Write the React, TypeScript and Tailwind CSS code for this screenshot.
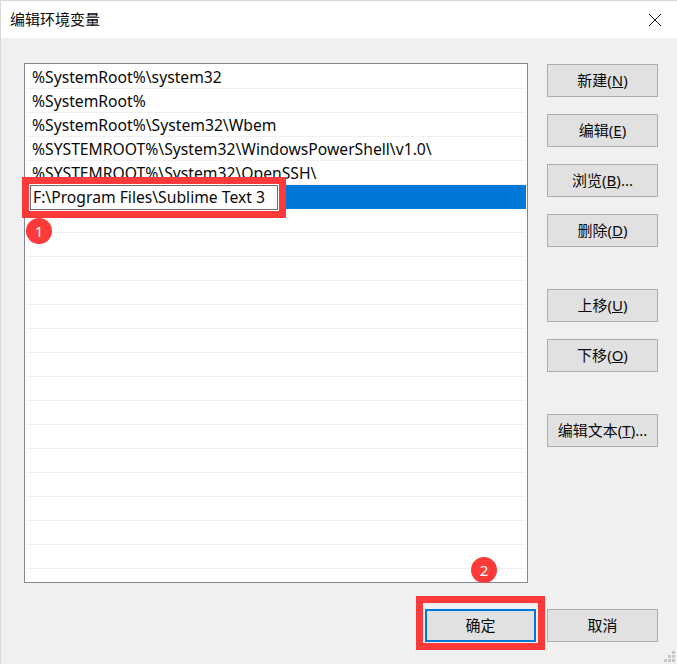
const FONT = "font-['Noto_Sans','Noto_Sans_CJK_SC',sans-serif]";

const paths = [
  "%SystemRoot%\\system32",
  "%SystemRoot%",
  "%SystemRoot%\\System32\\Wbem",
  "%SYSTEMROOT%\\System32\\WindowsPowerShell\\v1.0\\",
  "%SYSTEMROOT%\\System32\\OpenSSH\\",
];

function Btn({ label, u, tail = "", cls = "mt-0" }: { label: string; u?: string; tail?: string; cls?: string }) {
  return (
    <div className={`w-[111px] h-[33px] bg-[#e1e1e1] border border-[#adadad] flex items-center justify-center text-[15px] text-[#0a0a0a] whitespace-nowrap ${cls}`}>
      {label}
      {u && (
        <>
          (<span className="underline">{u}</span>){tail}
        </>
      )}
    </div>
  );
}

export default function App() {
  const empties = Array.from({ length: 15 });
  return (
    <div className={`relative w-[677px] h-[664px] overflow-hidden bg-[#f0f0f0] border-l border-t border-[#d8d8d8] ${FONT}`}>
      <div className="h-[37px] bg-white flex items-center justify-between pl-[9px] pr-[15px]">
        <span className="text-[15px] text-[#0a0a0a]">编辑环境变量</span>
        <svg width="14" height="14" viewBox="0 0 14 14" className="block">
          <path d="M1 1 L13 13 M13 1 L1 13" stroke="#1a1a1a" strokeWidth="1" fill="none" />
        </svg>
      </div>

      <div className="flex pl-[23px] pt-[25px]">
        <div className="w-[504px] h-[520px] bg-white border border-[#82878f] overflow-hidden px-px pt-px">
          {paths.map((p) => (
            <div key={p} className="h-[24px] pt-[2px] border-b border-[#f0f0f0] flex items-center pl-[6px] text-[15.7px] leading-none text-[#0a0a0a] whitespace-nowrap">
              {p}
            </div>
          ))}
          <div className="h-[24px] bg-[#0078d7]" />
          {empties.map((_, i) => (
            <div key={i} className="h-[24px] border-b border-[#f0f0f0]" />
          ))}
        </div>

        <div className="ml-[19px] pt-px flex flex-col">
          <Btn label="新建" u="N" />
          <Btn label="编辑" u="E" cls="mt-[17px]" />
          <Btn label="浏览" u="B" tail="..." cls="mt-[17px]" />
          <Btn label="删除" u="D" cls="mt-[17px]" />
          <Btn label="上移" u="U" cls="mt-[42px]" />
          <Btn label="下移" u="O" cls="mt-[17px]" />
          <Btn label="编辑文本" u="T" tail="..." cls="mt-[42px]" />
        </div>
      </div>

      <div className="flex justify-end gap-[11px] pr-[19px] pt-[26px]">
        <div className="w-[111px] h-[33px] bg-[#e1e1e1] border-2 border-[#0078d7] flex items-center justify-center text-[15px] text-[#0a0a0a]">确定</div>
        <Btn label="取消" />
      </div>

      {/* Annotations over the dialog */}
      <div className="absolute left-[21px] top-[176px] w-[264px] h-[41px] border-[7px] border-[#fc3a3a] bg-white">
        <div className="w-[248px] h-[25px] ml-px mt-px border border-[#6e6e6e] bg-white flex items-center pl-[2px] text-[15.7px] leading-none text-[#0a0a0a] whitespace-nowrap">
          F:\Program Files\Sublime Text 3
        </div>
      </div>
      <div className="absolute left-[25px] top-[217px] w-[26px] h-[26px] rounded-full bg-[#fc3a3a] text-white text-[15px] flex items-center justify-center">1</div>
      <div className="absolute left-[470px] top-[556px] w-[26px] h-[26px] rounded-full bg-[#fc3a3a] text-white text-[15px] flex items-center justify-center">2</div>
      <div className="absolute left-[415px] top-[595px] w-[129px] h-[54px] border-[7px] border-[#fc3a3a]" />

      <svg width="12" height="12" viewBox="0 0 12 12" className="absolute right-[1px] bottom-[1px]">
        <path d="M8 0h3v3H8zM4 4h3v3H4zM8 4h3v3H8zM0 8h3v3H0zM4 8h3v3H4zM8 8h3v3H8z" fill="#c8c8c8" />
      </svg>
    </div>
  );
}
